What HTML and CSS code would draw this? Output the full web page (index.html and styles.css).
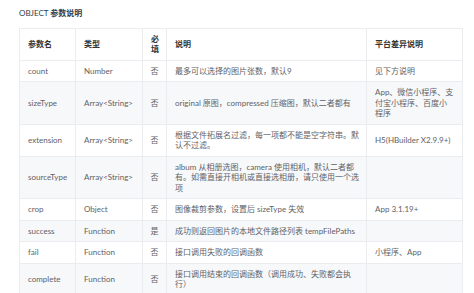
FILE: index.html
```html
<!DOCTYPE html>
<html lang="zh-CN">
<head>
    <meta charset="UTF-8">
    <title>chooseImage OBJECT 参数说明</title>
    <link rel="stylesheet" href="styles.css">
</head>
<body>

    <div class="doc">
        <!-- Section title -->
        <p class="doc-title">OBJECT <strong>参数说明</strong></p>

        <table class="param-table">
            <colgroup>
                <col class="col-name">
                <col class="col-type">
                <col class="col-req">
                <col class="col-desc">
                <col class="col-platform">
            </colgroup>
            <thead>
                <tr>
                    <th>参数名</th>
                    <th>类型</th>
                    <th>必填</th>
                    <th class="desc">说明</th>
                    <th>平台差异说明</th>
                </tr>
            </thead>
            <tbody>
                <tr>
                    <td class="nowrap">count</td>
                    <td class="nowrap">Number</td>
                    <td class="req">否</td>
                    <td class="desc">最多可以选择的图片张数，默认9</td>
                    <td>见下方说明</td>
                </tr>
                <tr>
                    <td class="nowrap">sizeType</td>
                    <td class="nowrap">Array&lt;String&gt;</td>
                    <td class="req">否</td>
                    <td class="desc">original 原图，compressed 压缩图，默认二者都有</td>
                    <td>App、微信小程序、支付宝小程序、百度小程序</td>
                </tr>
                <tr>
                    <td class="nowrap">extension</td>
                    <td class="nowrap">Array&lt;String&gt;</td>
                    <td class="req">否</td>
                    <td class="desc">根据文件拓展名过滤，每一项都不能是空字符串。默认不过滤。</td>
                    <td>H5(HBuilder X2.9.9+)</td>
                </tr>
                <tr>
                    <td class="nowrap">sourceType</td>
                    <td class="nowrap">Array&lt;String&gt;</td>
                    <td class="req">否</td>
                    <td class="desc">album 从相册选图，camera 使用相机，默认二者都有。如需直接开相机或直接选相册，请只使用一个选项</td>
                    <td></td>
                </tr>
                <tr>
                    <td class="nowrap">crop</td>
                    <td class="nowrap">Object</td>
                    <td class="req">否</td>
                    <td class="desc">图像裁剪参数，设置后 sizeType 失效</td>
                    <td>App 3.1.19+</td>
                </tr>
                <tr>
                    <td class="nowrap">success</td>
                    <td class="nowrap">Function</td>
                    <td class="req">是</td>
                    <td class="desc">成功则返回图片的本地文件路径列表 tempFilePaths</td>
                    <td></td>
                </tr>
                <tr>
                    <td class="nowrap">fail</td>
                    <td class="nowrap">Function</td>
                    <td class="req">否</td>
                    <td class="desc">接口调用失败的回调函数</td>
                    <td>小程序、App</td>
                </tr>
                <tr>
                    <td class="nowrap">complete</td>
                    <td class="nowrap">Function</td>
                    <td class="req">否</td>
                    <td class="desc">接口调用结束的回调函数（调用成功、失败都会执行）</td>
                    <td></td>
                </tr>
            </tbody>
        </table>
    </div>

</body>
</html>
```

FILE: styles.css
```css
body {
    font-family: 'Lato', 'Noto Sans CJK SC', sans-serif;
    background-color: #ffffff;
    color: #5f6266;
    margin: 0;
    padding: 0;
}

.doc {
    padding: 8px 12px 0 19px;
}

.doc-title {
    margin: 0 0 9px 0;
    font-size: 8px;
    line-height: 10.5px;
    color: #2c3e50;
}

.doc-title strong {
    font-weight: bold;
}

.param-table {
    width: 443px;
    table-layout: fixed;
    border-collapse: collapse;
    font-size: 8px;
    line-height: 10.5px;
}

.col-name { width: 56px; }
.col-type { width: 67px; }
.col-req { width: 24px; }
.col-desc { width: 200px; }
.col-platform { width: 96px; }

.param-table th,
.param-table td {
    border: 1px solid #eaecef;
    padding: 5px 8px;
    text-align: left;
    vertical-align: middle;
    word-wrap: break-word;
}

.param-table th {
    color: #333333;
    font-weight: bold;
    background-color: #ffffff;
}

.param-table tbody tr:nth-child(even) {
    background-color: #f7f8fa;
}

.param-table .nowrap {
    white-space: nowrap;
}

.param-table .desc {
    padding-right: 7px;
}

.param-table .req {
    text-align: center;
    padding-left: 4px;
    padding-right: 4px;
}
```
